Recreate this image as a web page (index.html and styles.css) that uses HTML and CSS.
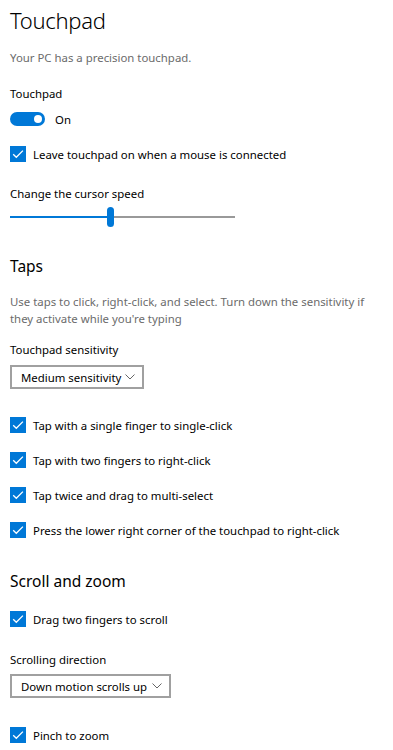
FILE: index.html
```html
<!DOCTYPE html>
<html lang="en">
<head>
<meta charset="utf-8">
<title>Touchpad</title>
<link rel="stylesheet" href="styles.css">
</head>
<body>
<main class="page">
  <h1 class="title">Touchpad</h1>
  <p class="note">Your PC has a precision touchpad.</p>

  <div class="label gap-16">Touchpad</div>
  <div class="toggle-row">
    <span class="toggle"><span class="knob"></span></span>
    <span class="toggle-text">On</span>
  </div>

  <div class="check gap-15">
    <span class="box"><svg viewBox="0 0 16 16" width="16" height="16"><path d="M3.2 8.2 L6.3 11.3 L12.9 4.6" fill="none" stroke="#fff" stroke-width="1.3"/></svg></span>
    <span>Leave touchpad on when a mouse is connected</span>
  </div>

  <div class="label gap-20">Change the cursor speed</div>
  <div class="slider">
    <span class="track-on"></span>
    <span class="thumb"></span>
    <span class="track-off"></span>
  </div>

  <h2 class="heading taps">Taps</h2>
  <p class="desc">Use taps to click, right-click, and select. Turn down the sensitivity if they activate while you're typing</p>

  <div class="label gap-13">Touchpad sensitivity</div>
  <div class="select sel-sens">
    <span>Medium sensitivity</span>
    <svg class="chev" viewBox="0 0 10 6" width="10" height="6"><path d="M0.5 0.5 L5 5 L9.5 0.5" fill="none" stroke="#666" stroke-width="1"/></svg>
  </div>

  <div class="checks">
    <div class="check">
      <span class="box"><svg viewBox="0 0 16 16" width="16" height="16"><path d="M3.2 8.2 L6.3 11.3 L12.9 4.6" fill="none" stroke="#fff" stroke-width="1.3"/></svg></span>
      <span>Tap with a single finger to single-click</span>
    </div>
    <div class="check">
      <span class="box"><svg viewBox="0 0 16 16" width="16" height="16"><path d="M3.2 8.2 L6.3 11.3 L12.9 4.6" fill="none" stroke="#fff" stroke-width="1.3"/></svg></span>
      <span>Tap with two fingers to right-click</span>
    </div>
    <div class="check">
      <span class="box"><svg viewBox="0 0 16 16" width="16" height="16"><path d="M3.2 8.2 L6.3 11.3 L12.9 4.6" fill="none" stroke="#fff" stroke-width="1.3"/></svg></span>
      <span>Tap twice and drag to multi-select</span>
    </div>
    <div class="check">
      <span class="box"><svg viewBox="0 0 16 16" width="16" height="16"><path d="M3.2 8.2 L6.3 11.3 L12.9 4.6" fill="none" stroke="#fff" stroke-width="1.3"/></svg></span>
      <span>Press the lower right corner of the touchpad to right-click</span>
    </div>
  </div>

  <h2 class="heading scroll">Scroll and zoom</h2>
  <div class="check gap-16">
    <span class="box"><svg viewBox="0 0 16 16" width="16" height="16"><path d="M3.2 8.2 L6.3 11.3 L12.9 4.6" fill="none" stroke="#fff" stroke-width="1.3"/></svg></span>
    <span>Drag two fingers to scroll</span>
  </div>

  <div class="label gap-21">Scrolling direction</div>
  <div class="select sel-dir">
    <span>Down motion scrolls up</span>
    <svg class="chev" viewBox="0 0 10 6" width="10" height="6"><path d="M0.5 0.5 L5 5 L9.5 0.5" fill="none" stroke="#666" stroke-width="1"/></svg>
  </div>

  <div class="check gap-27">
    <span class="box"><svg viewBox="0 0 16 16" width="16" height="16"><path d="M3.2 8.2 L6.3 11.3 L12.9 4.6" fill="none" stroke="#fff" stroke-width="1.3"/></svg></span>
    <span>Pinch to zoom</span>
  </div>
</main>
</body>
</html>
```

FILE: styles.css
```css
* { box-sizing: border-box; }
html, body { margin: 0; padding: 0; background: #fff; }
body {
  font-family: "Noto Sans", "Open Sans", sans-serif;
  font-size: 11.4px;
  color: #000;
  overflow: hidden;
}
.page {
  display: flex;
  flex-direction: column;
  align-items: flex-start;
  padding: 0 0 0 10px;
  height: 750px;
}
.title {
  margin: 0;
  height: 40px;
  line-height: 40px;
  font-size: 22px;
  font-weight: 300;
  letter-spacing: -0.3px;
}
.note {
  margin: 8px 0 0;
  height: 20px;
  line-height: 20px;
  color: #6b6b6b;
}
.label {
  height: 20px;
  line-height: 20px;
  white-space: nowrap;
}
.gap-13 { margin-top: 13px; }
.gap-15 { margin-top: 15px; }
.gap-16 { margin-top: 16px; }
.gap-20 { margin-top: 20px; }
.gap-21 { margin-top: 21px; }
.gap-27 { margin-top: 27px; }

.toggle-row {
  margin-top: 5px;
  height: 20px;
  display: flex;
  align-items: center;
  gap: 10px;
}
.toggle {
  width: 35px;
  height: 14px;
  border-radius: 7px;
  background: #0078d7;
  display: flex;
  align-items: center;
  justify-content: flex-end;
  padding-right: 3px;
}
.knob {
  width: 8px;
  height: 8px;
  border-radius: 50%;
  background: #fff;
}

.check {
  height: 20px;
  display: flex;
  align-items: center;
  gap: 7px;
  white-space: nowrap;
}
.box {
  width: 16px;
  height: 16px;
  background: #0078d7;
  display: flex;
  flex: none;
}

.slider {
  margin-top: 2px;
  height: 22px;
  width: 225px;
  display: flex;
  align-items: center;
}
.track-on {
  width: 97px;
  height: 2px;
  background: #0078d7;
}
.thumb {
  width: 7px;
  height: 20px;
  border-radius: 4px;
  background: #0078d7;
}
.track-off {
  flex: 1;
  height: 2px;
  background: #999;
}

.heading {
  margin: 0;
  height: 24px;
  line-height: 24px;
  font-size: 15.5px;
  font-weight: 400;
}
.taps { margin-top: 26px; }
.scroll { margin-top: 29px; }

.desc {
  margin: 15px 0 0;
  width: 370px;
  line-height: 17px;
  color: #6b6b6b;
}

.select {
  margin-top: 5px;
  height: 24px;
  border: 2px solid #a0a0a0;
  display: flex;
  align-items: center;
  justify-content: space-between;
  padding: 0 7px 0 9px;
  white-space: nowrap;
}
.sel-sens { width: 134px; }
.sel-dir { width: 161px; margin-top: 4px; }
.chev { display: block; flex: none; }

.checks {
  margin-top: 26px;
  display: flex;
  flex-direction: column;
  gap: 15px;
}
```
